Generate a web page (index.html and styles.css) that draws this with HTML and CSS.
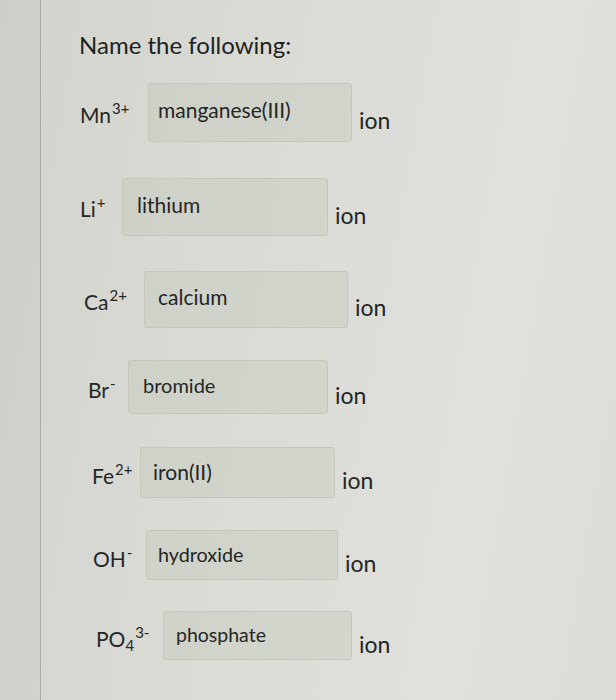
FILE: index.html
```html
<!DOCTYPE html>
<html>
<head>
<meta charset="utf-8">
<link rel="stylesheet" href="styles.css">
</head>
<body>
<div class="screen">
  <div class="gutter"></div>
  <div class="panel">
    <h1 class="title">Name the following:</h1>
    <div class="row r1"><span class="label">Mn<sup>3+</sup></span><div class="box">manganese(III)</div><span class="ion">ion</span></div>
    <div class="row r2"><span class="label">Li<sup>+</sup></span><div class="box">lithium</div><span class="ion">ion</span></div>
    <div class="row r3"><span class="label">Ca<sup>2+</sup></span><div class="box">calcium</div><span class="ion">ion</span></div>
    <div class="row r4"><span class="label">Br<sup>-</sup></span><div class="box">bromide</div><span class="ion">ion</span></div>
    <div class="row r5"><span class="label">Fe<sup>2+</sup></span><div class="box">iron(II)</div><span class="ion">ion</span></div>
    <div class="row r6"><span class="label">OH<sup>-</sup></span><div class="box">hydroxide</div><span class="ion">ion</span></div>
    <div class="row r7"><span class="label">PO<sub>4</sub><sup>3-</sup></span><div class="box">phosphate</div><span class="ion">ion</span></div>
  </div>
</div>
</body>
</html>
```
FILE: styles.css
```css
html, body {
  margin: 0;
  padding: 0;
}
body {
  width: 616px;
  height: 700px;
  overflow: hidden;
  font-family: Lato, "Open Sans", sans-serif;
  color: #2a2a2a;
  background: linear-gradient(100deg, #d2d3cd 0%, #d9dad4 35%, #e0e1dc 75%, #dcddd8 100%);
}
.screen {
  display: flex;
  height: 700px;
}
.gutter {
  width: 40px;
  flex: none;
  background: rgba(150, 150, 145, 0.08);
  border-right: 1px solid #a9aaa5;
}
.panel {
  flex: 1;
  padding-top: 31px;
}
.title {
  margin: 0 0 0 38px;
  font-size: 24px;
  font-weight: 400;
  line-height: 28px;
  color: #1f1f1f;
}
.row {
  display: flex;
  align-items: flex-start;
  margin-left: calc(var(--lx) - 41px);
  margin-top: var(--mt);
}
.label {
  width: var(--lw);
  flex: none;
  font-size: 21px;
  line-height: 22px;
  margin-top: calc(var(--h) * 0.35);
  color: #262626;
}
.label sup {
  font-size: 15px;
  vertical-align: 9px;
  line-height: 0;
  margin-left: 1px;
}
.label sub {
  font-size: 15px;
  vertical-align: -4px;
  line-height: 0;
}
.box {
  flex: none;
  box-sizing: border-box;
  width: var(--w);
  height: var(--h);
  padding: calc(var(--h) * 0.25) 0 0 var(--px, 12px);
  font-size: var(--fs, 21px);
  line-height: 21px;
  color: #262626;
  background: rgba(190, 198, 180, 0.35);
  border: 1px solid #c3c8bb;
  border-radius: 3px;
}
.ion {
  flex: none;
  margin-left: 7px;
  margin-top: calc(var(--h) * 0.44);
  font-size: 23px;
  line-height: 22px;
  color: #262626;
}
.r1 { --lx: 80px; --lw: 68px; --w: 204px; --h: 59px; --mt: 24px; --px: 9px; }
.r2 { --lx: 80px; --lw: 42px; --w: 206px; --h: 58px; --mt: 36px; --px: 14px; }
.r3 { --lx: 84px; --lw: 60px; --w: 204px; --h: 57px; --mt: 35px; --px: 13px; }
.r4 { --lx: 88px; --lw: 40px; --w: 200px; --h: 54px; --mt: 32px; --px: 14px; --fs: 20px; }
.r5 { --lx: 92px; --lw: 48px; --w: 195px; --h: 51px; --mt: 33px; --px: 12px; }
.r6 { --lx: 93px; --lw: 53px; --w: 192px; --h: 50px; --mt: 32px; --px: 11px; --fs: 19.8px; }
.r7 { --lx: 96px; --lw: 67px; --w: 189px; --h: 49px; --mt: 31px; --px: 12px; --fs: 19.5px; }
```
